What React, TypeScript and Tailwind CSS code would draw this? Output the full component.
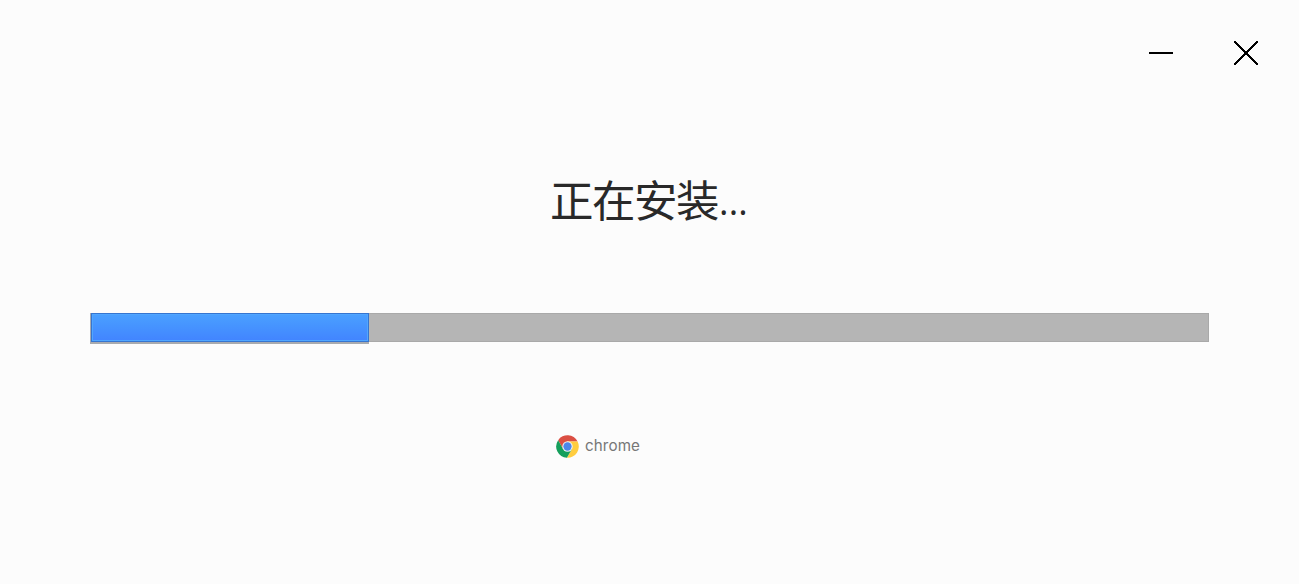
function ChromeLogo() {
  return (
    <svg className="h-[23px] w-[23px]" viewBox="0.5 0.3 23 23.4">
      <path d="M12 6.8H22.27A11.5 11.5 0 0 0 2.5 5.55L7.5 14.6Z" fill="#db4f43" />
      <path d="M16.5 14.6 11.4 23.48A11.5 11.5 0 0 0 22.27 6.8H12Z" fill="#ffcd40" />
      <path d="M7.5 14.6 2.5 5.55A11.5 11.5 0 0 0 11.4 23.48L16.5 14.6Z" fill="#159f5c" />
      <circle cx="12" cy="12" r="5.3" fill="#f1f1f1" />
      <circle cx="12" cy="12" r="4.2" fill="#4b87ec" />
    </svg>
  );
}

export default function App() {
  return (
    <main className="flex h-[584px] w-[1299px] flex-col overflow-hidden bg-[#fcfcfc] font-['Noto_Sans_CJK_SC',sans-serif]">
      <header className="flex h-[106px] items-center justify-end gap-[61px] pr-[41px]">
        <button aria-label="Minimize" className="h-6 w-6">
          <svg className="h-6 w-6" viewBox="0 0 24 24">
            <path d="M0 11h24v2H0z" fill="#000" shapeRendering="crispEdges" />
          </svg>
        </button>
        <button aria-label="Close" className="h-6 w-6">
          <svg className="h-6 w-6" viewBox="0 0 24 24">
            <path d="M0 0 24 24M24 0 0 24" stroke="#000" strokeWidth="2.2" shapeRendering="crispEdges" />
          </svg>
        </button>
      </header>

      <h1 className="mt-[63px] flex h-[60px] pl-[550px] text-[43.5px] leading-[60px] font-normal text-[#292929]">
        <span className="tracking-[-1.5px]">正在安装</span>
        <span className="pt-[3px] pl-px font-['Open_Sans',sans-serif] text-[36px] tracking-[0.2px]">...</span>
      </h1>

      <div className="mt-[84px] ml-[90px] flex h-[31px] w-[1119px] items-start">
        <div className="h-[31px] w-[279px] bg-[#a9abaf] pb-px pl-px">
          <div className="h-[29px] border border-[#3675d0]">
            <div className="h-full border border-[#50a6ff] bg-linear-to-b from-[#4a9fff] to-[#4285ff]" />
          </div>
        </div>
        <div className="h-[29px] flex-1 border border-l-0 border-[#a9a9a9] bg-[#b5b5b5]" />
      </div>

      <footer className="mt-[90.5px] ml-[556px] flex h-[23px] items-center gap-1.5">
        <ChromeLogo />
        <span className="font-['Inter',sans-serif] text-[15.2px] leading-[22px] tracking-[0.1px] text-[#777777]">chrome</span>
      </footer>
    </main>
  );
}
